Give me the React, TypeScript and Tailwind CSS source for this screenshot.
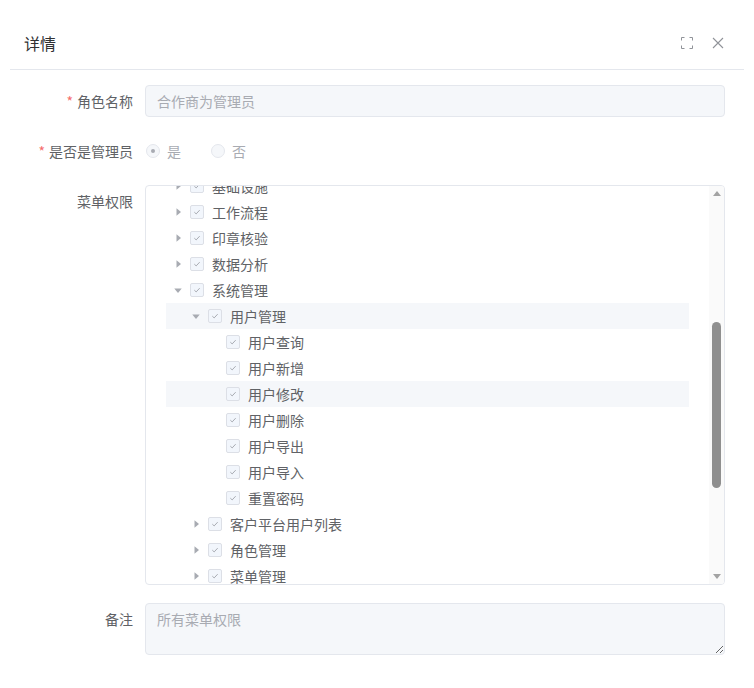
import React from "react";

type Node = {
  label: string;
  level: number;
  expanded?: boolean;
  leaf?: boolean;
  active?: boolean;
};

const rows: Node[] = [
  { label: "基础设施", level: 1 },
  { label: "工作流程", level: 1 },
  { label: "印章核验", level: 1 },
  { label: "数据分析", level: 1 },
  { label: "系统管理", level: 1, expanded: true },
  { label: "用户管理", level: 2, expanded: true, active: true },
  { label: "用户查询", level: 3, leaf: true },
  { label: "用户新增", level: 3, leaf: true },
  { label: "用户修改", level: 3, leaf: true, active: true },
  { label: "用户删除", level: 3, leaf: true },
  { label: "用户导出", level: 3, leaf: true },
  { label: "用户导入", level: 3, leaf: true },
  { label: "重置密码", level: 3, leaf: true },
  { label: "客户平台用户列表", level: 2 },
  { label: "角色管理", level: 2 },
  { label: "菜单管理", level: 2 },
];

const indentClass: Record<number, string> = {
  1: "pl-0",
  2: "pl-[18px]",
  3: "pl-[36px]",
};

function Caret({ down, hidden }: { down?: boolean; hidden?: boolean }) {
  return (
    <span className="w-[24px] h-[24px] flex items-center justify-center shrink-0">
      {!hidden && (
        <svg
          viewBox="0 0 1024 1024"
          className={"w-[12px] h-[12px] " + (down ? "rotate-90" : "")}
          fill="#a8abb2"
        >
          <path d="M384 192v640l384-320.064z" />
        </svg>
      )}
    </span>
  );
}

function Check() {
  return (
    <span className="w-[14px] h-[14px] rounded-[2px] border border-[#dcdfe6] bg-[#f2f6fc] flex items-center justify-center shrink-0">
      <svg viewBox="0 0 12 12" className="w-[10px] h-[10px]" fill="none" stroke="#a8abb2" strokeWidth="1.2">
        <path d="M2.8 6.2 L5 8.3 L9.2 3.8" />
      </svg>
    </span>
  );
}

function TreeRow({ node }: { node: Node }) {
  return (
    <div
      className={
        "h-[26px] flex items-center " +
        indentClass[node.level] +
        (node.active ? " bg-[#f5f7fa]" : "")
      }
    >
      <Caret down={node.expanded} hidden={node.leaf} />
      <Check />
      <span className="ml-[8px] text-[14px] text-[#606266] leading-none whitespace-nowrap">
        {node.label}
      </span>
    </div>
  );
}

function Label({ text, required, top }: { text: string; required?: boolean; top?: boolean }) {
  return (
    <div
      className={
        "w-[135px] shrink-0 pr-[12px] flex justify-end text-[14px] text-[#606266] " +
        (top ? "items-start h-[32px] leading-[32px]" : "items-center h-[32px]")
      }
    >
      {required && <span className="text-[#f56c6c] mr-[4px]">*</span>}
      <span>{text}</span>
    </div>
  );
}

export default function App() {
  return (
    <div
      className="w-[754px] h-[688px] bg-white"
      style={{ fontFamily: '"Noto Sans CJK SC", "Noto Sans", sans-serif' }}
    >
      {/* header */}
      <div className="mx-[10px] pt-[31px] pb-[14px] border-b border-[#e4e7ed] flex items-center">
        <div className="pl-[14px] text-[16px] leading-[24px] text-[#303133]">详情</div>
        <div className="ml-auto flex items-center gap-[19px] pr-[20px]">
          <svg viewBox="0 0 12 12" className="w-[12px] h-[12px]" fill="none" stroke="#909399" strokeWidth="1">
            <path d="M0.5 3.5V0.5H3.5M8.5 0.5H11.5V3.5M11.5 8.5V11.5H8.5M3.5 11.5H0.5V8.5" />
          </svg>
          <svg viewBox="0 0 12 12" className="w-[12px] h-[12px]" fill="none" stroke="#909399" strokeWidth="1.1">
            <path d="M1 1L11 11M11 1L1 11" />
          </svg>
        </div>
      </div>

      {/* body */}
      <div className="pl-[10px] pr-[29px] pt-[15px] flex flex-col gap-[18px]">
        <div className="flex">
          <Label text="角色名称" required />
          <div className="flex-1 h-[32px] rounded-[4px] border border-[#e4e7ed] bg-[#f5f7fa] px-[11px] flex items-center text-[14px] text-[#a8abb2]">
            合作商为管理员
          </div>
        </div>

        <div className="flex">
          <Label text="是否是管理员" required />
          <div className="flex items-center h-[32px] text-[14px] text-[#a8abb2]">
            <span className="w-[14px] h-[14px] rounded-full border border-[#e4e7ed] bg-[#f5f7fa] flex items-center justify-center ml-[1px]">
              <span className="w-[4px] h-[4px] rounded-full bg-[#a8abb2]" />
            </span>
            <span className="ml-[7px]">是</span>
            <span className="w-[14px] h-[14px] rounded-full border border-[#e4e7ed] bg-[#f5f7fa] ml-[30px]" />
            <span className="ml-[7px]">否</span>
          </div>
        </div>

        <div className="flex">
          <Label text="菜单权限" top />
          <div className="flex-1 h-[400px] border border-[#e4e7ed] rounded-[4px] flex overflow-hidden">
            <div className="flex-1 overflow-hidden px-[20px]">
              <div className="-mt-[13px]">
                {rows.map((n) => (
                  <TreeRow key={n.label} node={n} />
                ))}
              </div>
            </div>
            <div className="w-[15px] shrink-0 bg-[#fafafa] flex flex-col items-center">
              <div className="h-[15px] flex items-center justify-center">
                <svg viewBox="0 0 8 5" className="w-[8px] h-[5px]" fill="#a3a3a3">
                  <path d="M0 5L4 0L8 5Z" />
                </svg>
              </div>
              <div className="flex-1 w-full flex flex-col items-center">
                <div className="h-[121px]" />
                <div className="w-[9px] h-[166px] rounded-full bg-[#8f8f8f]" />
              </div>
              <div className="h-[15px] flex items-center justify-center">
                <svg viewBox="0 0 8 5" className="w-[8px] h-[5px]" fill="#a3a3a3">
                  <path d="M0 0L8 0L4 5Z" />
                </svg>
              </div>
            </div>
          </div>
        </div>

        <div className="flex">
          <Label text="备注" top />
          <textarea
            readOnly
            placeholder="所有菜单权限"
            className="flex-1 h-[52px] rounded-[4px] border border-[#e4e7ed] bg-[#f5f7fa] px-[11px] py-[5px] text-[14px] leading-[21px] text-[#a8abb2] placeholder:text-[#a8abb2] outline-none"
          />
        </div>
      </div>
    </div>
  );
}
